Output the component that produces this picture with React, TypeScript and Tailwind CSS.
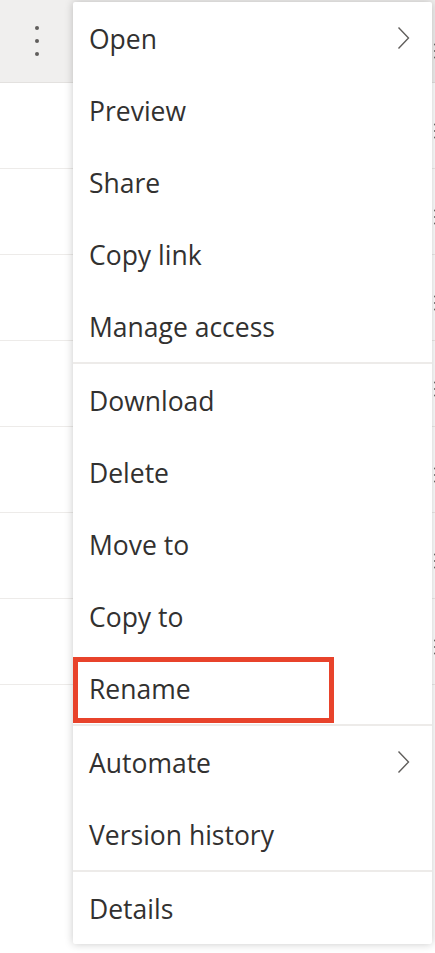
import React from 'react';

type Item = { label: string; sub?: boolean; marked?: boolean };

const sections: Item[][] = [
    [{ label: 'Open', sub: true }, { label: 'Preview' }, { label: 'Share' }, { label: 'Copy link' }, { label: 'Manage access' }],
    [{ label: 'Download' }, { label: 'Delete' }, { label: 'Move to' }, { label: 'Copy to' }, { label: 'Rename', marked: true }],
    [{ label: 'Automate', sub: true }, { label: 'Version history' }],
    [{ label: 'Details' }],
];

function Chevron() {
    return (
        <svg width="13" height="24" viewBox="0 0 13 24" fill="none" className="text-[#605e5c]">
            <path d="M1.5 1.5 L11.5 12 L1.5 22.5" stroke="currentColor" strokeWidth="1.4" />
        </svg>
    );
}

function MoreDots({ className }: { className?: string }) {
    return (
        <div className={`flex flex-col gap-[9px] ${className ?? ''}`}>
            <span className="w-[4px] h-[4px] rounded-full bg-[#605e5c]" />
            <span className="w-[4px] h-[4px] rounded-full bg-[#605e5c]" />
            <span className="w-[4px] h-[4px] rounded-full bg-[#605e5c]" />
        </div>
    );
}

export default function App() {
    return (
        <div
            className="relative w-[435px] h-[953px] bg-white overflow-hidden text-[#323130]"
            style={{ fontFamily: '"Open Sans", "Noto Sans", sans-serif' }}
        >
            {/* list behind the menu */}
            <div className="relative h-[83px] bg-[#f0efee] border-b border-[#e3e1df] flex items-center">
                <MoreDots className="ml-[35px] gap-[8px]" />
                <MoreDots className="absolute right-[-2px] top-[36px] gap-[2px] scale-50" />
            </div>
            {Array.from({ length: 7 }).map((_, i) => (
                <div key={i} className="relative h-[86px] border-b border-[#edebe9]">
                    <MoreDots className="absolute right-[-2px] top-[33px] gap-[2px] scale-50" />
                </div>
            ))}

            {/* context menu */}
            <div className="absolute left-[73px] top-[2px] w-[359px] bg-white rounded-[2px] shadow-[0_0_8px_rgba(0,0,0,0.22)]">
                {sections.map((section, si) => (
                    <div key={si} className={si > 0 ? 'border-t-2 border-[#edebe9]' : ''}>
                        {section.map((item) => (
                            <div key={item.label} className="relative h-[72px] flex items-center pl-[16px] pr-[22px]">
                                <span className="text-[26.5px] leading-none flex-1 pt-[3px]">{item.label}</span>
                                {item.sub && <Chevron />}
                                {item.marked && (
                                    <div className="absolute left-0 top-[5px] w-[261px] h-[66px] border-[5px] border-[#e8432b]" />
                                )}
                            </div>
                        ))}
                    </div>
                ))}
            </div>
        </div>
    );
}
